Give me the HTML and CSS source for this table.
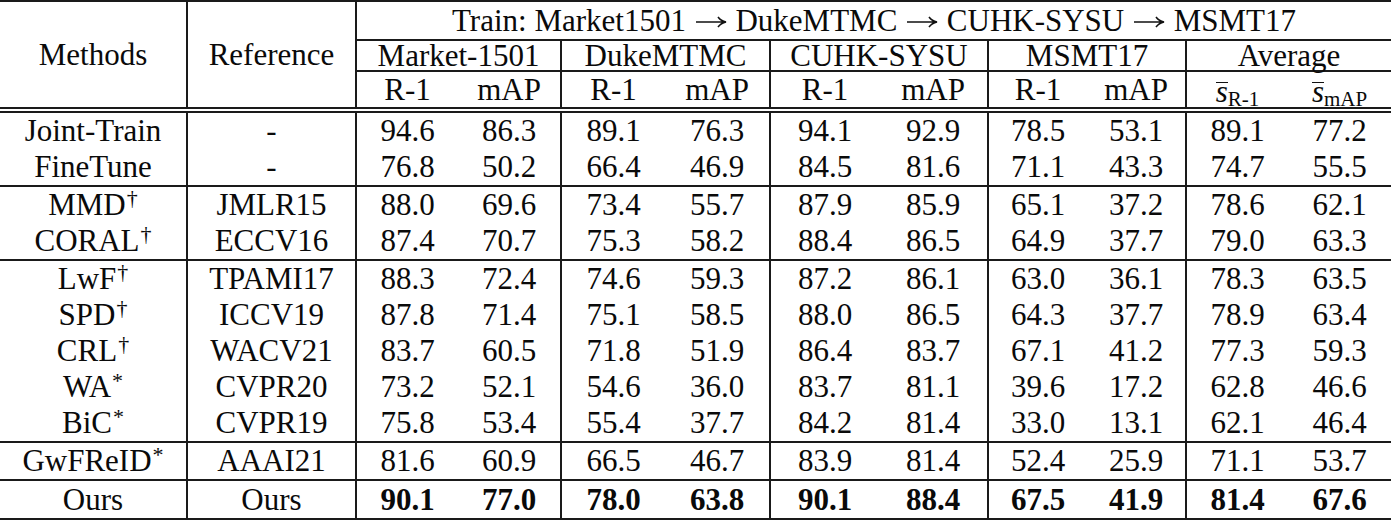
FILE: index.html
```html
<!DOCTYPE html>
<html>
<head>
<meta charset="utf-8">
<link rel="stylesheet" href="styles.css">
</head>
<body>
<table class="results">
  <colgroup>
    <col class="c-meth"><col class="c-ref">
    <col class="c-m1"><col class="c-m2">
    <col class="c-d1"><col class="c-d2">
    <col class="c-c1"><col class="c-c2">
    <col class="c-s1"><col class="c-s2">
    <col class="c-a1"><col class="c-a2">
  </colgroup>
  <thead>
    <tr class="h1">
      <th rowspan="3" class="vr">Methods</th>
      <th rowspan="3" class="vr">Reference</th>
      <th colspan="10" class="train">Train: Market1501 <svg class="arr" viewBox="0 0 32 14" width="32" height="14"><path d="M1 7 H30 M23 2 Q26 6 31 7 Q26 8 23 12" fill="none" stroke="#111" stroke-width="1.6"/></svg> DukeMTMC <svg class="arr" viewBox="0 0 32 14" width="32" height="14"><path d="M1 7 H30 M23 2 Q26 6 31 7 Q26 8 23 12" fill="none" stroke="#111" stroke-width="1.6"/></svg> CUHK-SYSU <svg class="arr" viewBox="0 0 32 14" width="32" height="14"><path d="M1 7 H30 M23 2 Q26 6 31 7 Q26 8 23 12" fill="none" stroke="#111" stroke-width="1.6"/></svg> MSMT17</th>
    </tr>
    <tr class="h2">
      <th colspan="2" class="vr">Market-1501</th>
      <th colspan="2" class="vr">DukeMTMC</th>
      <th colspan="2" class="vr">CUHK-SYSU</th>
      <th colspan="2" class="vr">MSMT17</th>
      <th colspan="2">Average</th>
    </tr>
    <tr class="h3">
      <th>R-1</th><th class="vr">mAP</th>
      <th>R-1</th><th class="vr">mAP</th>
      <th>R-1</th><th class="vr">mAP</th>
      <th>R-1</th><th class="vr">mAP</th>
      <th><span class="sbar">s</span><span class="sub">R-1</span></th>
      <th><span class="sbar">s</span><span class="sub">mAP</span></th>
    </tr>
  </thead>
  <tbody class="first">
    <tr><td class="vr">Joint-Train</td><td class="vr">-</td><td>94.6</td><td class="vr">86.3</td><td>89.1</td><td class="vr">76.3</td><td>94.1</td><td class="vr">92.9</td><td>78.5</td><td class="vr">53.1</td><td>89.1</td><td>77.2</td></tr>
    <tr><td class="vr">FineTune</td><td class="vr">-</td><td>76.8</td><td class="vr">50.2</td><td>66.4</td><td class="vr">46.9</td><td>84.5</td><td class="vr">81.6</td><td>71.1</td><td class="vr">43.3</td><td>74.7</td><td>55.5</td></tr>
  </tbody>
  <tbody class="sec">
    <tr><td class="vr">MMD<span class="mk">†</span></td><td class="vr">JMLR15</td><td>88.0</td><td class="vr">69.6</td><td>73.4</td><td class="vr">55.7</td><td>87.9</td><td class="vr">85.9</td><td>65.1</td><td class="vr">37.2</td><td>78.6</td><td>62.1</td></tr>
    <tr><td class="vr">CORAL<span class="mk">†</span></td><td class="vr">ECCV16</td><td>87.4</td><td class="vr">70.7</td><td>75.3</td><td class="vr">58.2</td><td>88.4</td><td class="vr">86.5</td><td>64.9</td><td class="vr">37.7</td><td>79.0</td><td>63.3</td></tr>
  </tbody>
  <tbody class="sec">
    <tr><td class="vr">LwF<span class="mk">†</span></td><td class="vr">TPAMI17</td><td>88.3</td><td class="vr">72.4</td><td>74.6</td><td class="vr">59.3</td><td>87.2</td><td class="vr">86.1</td><td>63.0</td><td class="vr">36.1</td><td>78.3</td><td>63.5</td></tr>
    <tr><td class="vr">SPD<span class="mk">†</span></td><td class="vr">ICCV19</td><td>87.8</td><td class="vr">71.4</td><td>75.1</td><td class="vr">58.5</td><td>88.0</td><td class="vr">86.5</td><td>64.3</td><td class="vr">37.7</td><td>78.9</td><td>63.4</td></tr>
    <tr><td class="vr">CRL<span class="mk">†</span></td><td class="vr">WACV21</td><td>83.7</td><td class="vr">60.5</td><td>71.8</td><td class="vr">51.9</td><td>86.4</td><td class="vr">83.7</td><td>67.1</td><td class="vr">41.2</td><td>77.3</td><td>59.3</td></tr>
    <tr><td class="vr">WA<span class="mk ast">*</span></td><td class="vr">CVPR20</td><td>73.2</td><td class="vr">52.1</td><td>54.6</td><td class="vr">36.0</td><td>83.7</td><td class="vr">81.1</td><td>39.6</td><td class="vr">17.2</td><td>62.8</td><td>46.6</td></tr>
    <tr><td class="vr">BiC<span class="mk ast">*</span></td><td class="vr">CVPR19</td><td>75.8</td><td class="vr">53.4</td><td>55.4</td><td class="vr">37.7</td><td>84.2</td><td class="vr">81.4</td><td>33.0</td><td class="vr">13.1</td><td>62.1</td><td>46.4</td></tr>
  </tbody>
  <tbody class="sec">
    <tr><td class="vr">GwFReID<span class="mk ast">*</span></td><td class="vr">AAAI21</td><td>81.6</td><td class="vr">60.9</td><td>66.5</td><td class="vr">46.7</td><td>83.9</td><td class="vr">81.4</td><td>52.4</td><td class="vr">25.9</td><td>71.1</td><td>53.7</td></tr>
  </tbody>
  <tbody class="sec last">
    <tr class="bold"><td class="vr plain">Ours</td><td class="vr plain">Ours</td><td>90.1</td><td class="vr">77.0</td><td>78.0</td><td class="vr">63.8</td><td>90.1</td><td class="vr">88.4</td><td>67.5</td><td class="vr">41.9</td><td>81.4</td><td>67.6</td></tr>
  </tbody>
</table>
</body>
</html>
```

FILE: styles.css
```css
html, body {
  margin: 0;
  padding: 0;
  background: #ffffff;
}

.results {
  width: 1391px;
  table-layout: fixed;
  border-collapse: collapse;
  font-family: "Liberation Serif", "Times New Roman", serif;
  font-size: 31px;
  color: #0a0a0a;
  border-top: 2px solid #1a1a1a;
  border-bottom: 2px solid #1a1a1a;
}

.c-meth { width: 187px; }
.c-ref { width: 169px; }
.c-m1 { width: 102px; }
.c-m2 { width: 103px; }
.c-d1 { width: 104px; }
.c-d2 { width: 105px; }
.c-c1 { width: 109px; }
.c-c2 { width: 109px; }
.c-s1 { width: 99px; }
.c-s2 { width: 99px; }
.c-a1 { width: 102px; }
.c-a2 { width: 103px; }

.results th,
.results td {
  padding: 0;
  text-align: center;
  font-weight: normal;
  white-space: nowrap;
}

.results .vr {
  border-right: 2px solid #1a1a1a;
}

.h1 th { height: 37px; line-height: 37px; }
.h2 th { height: 29px; line-height: 29px; border-top: 2px solid #1a1a1a; }
.h3 th { height: 35px; line-height: 35px; border-top: 2px solid #1a1a1a; }
.h1 th.vr { border-top: none; }

thead tr.h3 th,
thead th[rowspan] {
  border-bottom: 6px double #1a1a1a;
}

.results td {
  height: 36px;
  line-height: 36px;
}

tbody.last td {
  height: 37px;
  line-height: 37px;
}

tbody.sec tr:first-child td {
  border-top: 2px solid #1a1a1a;
}

.bold td { font-weight: bold; }
.bold td.plain { font-weight: normal; }

.mk {
  font-size: 22px;
  vertical-align: 10px;
  line-height: 0;
  margin-left: 1px;
}
.mk.ast {
  vertical-align: 9px;
}

.arr {
  display: inline-block;
  vertical-align: 2px;
  margin: 0 1px;
}

.sbar {
  display: inline-block;
  font-style: italic;
  line-height: 16px;
  border-top: 1.5px solid #111;
  padding-top: 1px;
  vertical-align: -2px;
}

.sub {
  font-size: 21px;
  vertical-align: -6px;
  line-height: 0;
}
```
